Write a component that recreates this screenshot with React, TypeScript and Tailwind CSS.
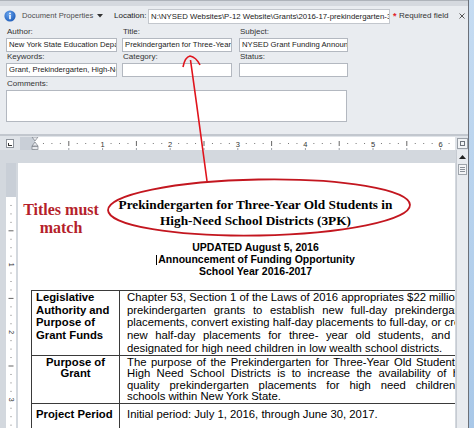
import React from 'react';

const IN = 67.6;

const HRuler = () => {
  const marks: React.ReactNode[] = [];
  for (let i = 1; i <= 60; i++) {
    const x = 15 + (i * IN) / 8;
    if (x > 433) break;
    if (i % 8 === 0) {
      marks.push(
        <text key={i} x={x} y={9.6} fontSize="7.5" textAnchor="middle" fill="#333" fontFamily="Liberation Sans, Arial, sans-serif">
          {i / 8}
        </text>
      );
    } else if (i % 4 === 0) {
      marks.push(<rect key={i} x={x - 0.5} y={4} width={1} height={5} fill="#666" />);
    } else {
      marks.push(<rect key={i} x={x - 0.5} y={6} width={1} height={1} fill="#777" />);
    }
    if (i % 4 === 0) marks.push(<rect key={'t' + i} x={x - 0.5} y={11} width={1} height={2} fill="#9aa0a8" />);
  }
  return (
    <svg width="435" height="13" className="block">
      <rect x="0" y="0" width="435" height="13" fill="#ffffff" />
      <rect x="0" y="0" width="15" height="13" fill="#c9cfd7" />
      {marks}
      <path d="M12 0 L18 0 L15 4 Z" fill="#e8eaee" stroke="#7a7f87" strokeWidth="0.7" />
      <path d="M15 5 L18 9 L12 9 Z" fill="#e8eaee" stroke="#7a7f87" strokeWidth="0.7" />
      <rect x="12" y="9.5" width="6" height="3" fill="#e8eaee" stroke="#7a7f87" strokeWidth="0.7" />
    </svg>
  );
};

const VRuler = () => {
  const marks: React.ReactNode[] = [];
  for (let i = 1; i <= 40; i++) {
    const y = 34 + (i * IN) / 8;
    if (y > 265) break;
    if (i % 8 === 0) {
      marks.push(
        <text key={i} x={5} y={y} fontSize="7" textAnchor="middle" dominantBaseline="central" fill="#333" fontFamily="Liberation Sans, Arial, sans-serif" transform={`rotate(90 5 ${y})`}>
          {i / 8}
        </text>
      );
    } else if (i % 4 === 0) {
      marks.push(<rect key={i} x={2.5} y={y - 0.5} width={5} height={1} fill="#666" />);
    } else {
      marks.push(<rect key={i} x={4.5} y={y - 0.5} width={1} height={1} fill="#777" />);
    }
  }
  return (
    <svg width="10" height="265" className="block">
      <rect x="0" y="0" width="10" height="265" fill="#ffffff" />
      <rect x="0" y="0" width="10" height="34" fill="#c9cfd7" />
      {marks}
    </svg>
  );
};

const Field = ({ label, value, w, className = '' }: { label: string; value: string; w: string; className?: string }) => (
  <div className={`${w} ${className}`}>
    <div className="h-[10px] leading-[10px] pl-[1px] text-[8px] text-[#333]">{label}</div>
    <div className="mt-[1px] h-[14px] bg-white border border-[#b3b8c0] px-[2px] leading-[12px] text-[7.7px] text-[#222] whitespace-nowrap overflow-hidden">
      {value}
    </div>
  </div>
);

const Line = ({ children, j = false }: { children: React.ReactNode; j?: boolean }) =>
  j ? (
    <div className="w-[347px] text-justify [text-align-last:justify]">{children}</div>
  ) : (
    <div className="whitespace-nowrap">{children}</div>
  );

export default function App() {
  return (
    <div className="relative w-[474px] h-[428px] overflow-hidden flex bg-[#bcd5ee] font-['Liberation_Sans',Arial,sans-serif]">
      <div className="w-[469px] h-full flex flex-col border-r border-[#6b7079] bg-[#e9ecf0]">
        {/* top strip */}
        <div className="h-[6px] bg-[#d5d9df] border-t border-[#aeb3ba]" />

        {/* document properties header */}
        <div className="h-[20px] flex items-center">
          <div className="w-[4px]" />
          <svg width="12" height="12" viewBox="0 0 12 12" className="shrink-0">
            <defs>
              <radialGradient id="ig" cx="40%" cy="35%" r="70%">
                <stop offset="0%" stopColor="#6aa6f0" />
                <stop offset="100%" stopColor="#1d5bb8" />
              </radialGradient>
            </defs>
            <circle cx="6" cy="6" r="5.6" fill="url(#ig)" />
            <circle cx="6" cy="3.4" r="0.9" fill="#fff" />
            <rect x="5.2" y="5" width="1.6" height="4.2" fill="#fff" />
          </svg>
          <div className="w-[6px]" />
          <div className="w-[92px] flex items-center text-[7.6px] text-[#4d4d4d]">
            <span>Document Properties</span>
            <svg width="6" height="4" className="ml-[4px]">
              <path d="M0 0 L6 0 L3 3.5 Z" fill="#333" />
            </svg>
          </div>
          <div className="w-[34px] text-[8px] text-[#222]">Location:</div>
          <div className="w-[242px] h-[15px] bg-white border border-[#c3c7cd] px-[2px] leading-[13px] text-[7.8px] text-[#222] whitespace-nowrap overflow-hidden">
            N:\NYSED Websites\P-12 Website\Grants\2016-17-prekindergarten-3pk
          </div>
          <div className="w-[3px]" />
          <div className="w-[6px] text-[9px] font-bold text-[#e0222a] leading-[9px]">*</div>
          <div className="w-[60px] text-[8px] text-[#333]">Required field</div>
          <svg width="6" height="6" className="shrink-0">
            <path d="M0.5 0.5 L5.5 5.5 M5.5 0.5 L0.5 5.5" stroke="#555" strokeWidth="1" />
          </svg>
        </div>

        {/* property fields */}
        <div className="px-[6px] pt-[1px] h-[108px]">
          <div className="flex">
            <Field label="Author:" value="New York State Education Department" w="w-[111px]" />
            <Field label="Title:" value="Prekindergarten for Three-Year Old Students" w="w-[110px]" className="ml-[5px]" />
            <Field label="Subject:" value="NYSED Grant Funding Announcement" w="w-[109px]" className="ml-[7px]" />
          </div>
          <div className="flex">
            <Field label="Keywords:" value="Grant, Prekindergarten, High-Need" w="w-[111px]" />
            <Field label="Category:" value="" w="w-[110px]" className="ml-[5px]" />
            <Field label="Status:" value="" w="w-[109px]" className="ml-[7px]" />
          </div>
          <div className="mt-[2px] h-[10px] leading-[10px] pl-[1px] text-[8px] text-[#333]">Comments:</div>
          <div className="mt-[1px] w-[341px] h-[32px] bg-white border border-[#b3b8c0]" />
        </div>

        {/* ruler band */}
        <div className="h-[16px] flex items-end bg-[#dfe3e8] border-t-[2px] border-[#c2c7ce]">
          <div className="w-[6px]" />
          <div className="w-[8px] h-[9px] mb-[2px] bg-white border border-[#8d939b] flex items-end justify-start">
            <div className="w-[4px] h-[3px] ml-[1px] mb-[1px] border-l border-b border-[#333]" />
          </div>
          <div className="w-[6px]" />
          <HRuler />
          <div className="w-[2px]" />
          <div className="w-[11px] h-[11px] mb-[1px] bg-[#f1f3f5] border border-[#9aa0a8] flex items-center justify-center">
            <div className="w-[5px] h-[5px] border border-[#6d737b]" />
          </div>
        </div>

        {/* document area */}
        <div className="flex-1 flex bg-[#d3d8de] min-h-0">
          <div className="w-[6px]" />
          <div className="w-[10px] pt-[13px]">
            <VRuler />
          </div>
          <div className="w-[2px]" />
          <div className="w-[437px] pt-[13px] overflow-hidden">
            <div className="h-full bg-white pl-[17px] pt-[34px]">
              <div className="w-[441px] text-black">
                <div className="text-center font-['Liberation_Serif',serif] font-bold text-[13.3px] leading-[16px]">
                  <div>Prekindergarten for Three-Year Old Students in</div>
                  <div>High-Need School Districts (3PK)</div>
                </div>
                <div className="mt-[12px] text-center font-bold text-[10.5px] leading-[12px]">
                  <div>UPDATED August 5, 2016</div>
                  <div>
                    <span className="inline-block w-0 h-[10px] border-l border-black align-[-2px] mr-[1px]" />
                    Announcement of Funding Opportunity
                  </div>
                  <div>School Year 2016-2017</div>
                </div>

                {/* table */}
                <div className="mt-[13px] -ml-[4px] w-[449px] border-l border-t border-[#3a3a3a] text-[11.3px]">
                  <div className="flex border-b border-[#3a3a3a] leading-[12.7px]">
                    <div className="w-[88px] shrink-0 border-r border-[#3a3a3a] pl-[4px] font-bold">
                      <div>Legislative</div>
                      <div>Authority and</div>
                      <div>Purpose of</div>
                      <div>Grant Funds</div>
                    </div>
                    <div className="pl-[7px] shrink-0 w-[360px]">
                      <Line>Chapter 53, Section 1 of the Laws of 2016 appropriates $22 million</Line>
                      <Line j>prekindergarten grants to establish new full-day prekindergarten</Line>
                      <Line>placements, convert existing half-day placements to full-day, or create</Line>
                      <Line j>new half-day placements for three- year old students, and are</Line>
                      <Line>designated for high need children in low wealth school districts.</Line>
                    </div>
                  </div>
                  <div className="flex border-b border-[#3a3a3a] leading-[11.6px]">
                    <div className="w-[88px] shrink-0 border-r border-[#3a3a3a] text-center font-bold pt-[1px]">
                      <div>Purpose of</div>
                      <div>Grant</div>
                    </div>
                    <div className="pl-[7px] shrink-0 w-[360px] pt-[1px]">
                      <Line j>The purpose of the Prekindergarten for Three-Year Old Students in</Line>
                      <Line j>High Need School Districts is to increase the availability of high</Line>
                      <Line j>quality prekindergarten placements for high need children in</Line>
                      <Line>schools within New York State.</Line>
                    </div>
                  </div>
                  <div className="flex leading-[12px] h-[40px]">
                    <div className="w-[88px] shrink-0 border-r border-[#3a3a3a] pl-[4px] pt-[4px] font-bold whitespace-nowrap">
                      Project Period
                    </div>
                    <div className="pl-[7px] shrink-0 w-[360px] pt-[4px]">
                      <Line>Initial period: July 1, 2016, through June 30, 2017.</Line>
                    </div>
                  </div>
                </div>
              </div>
            </div>
          </div>
          <div className="w-[1px]" />
          <div className="w-[12px] bg-[#e8ebef] border-l border-[#c6cbd2] flex flex-col items-center">
            <svg width="7" height="4" className="mt-[5px]">
              <path d="M0 4 L3.5 0 L7 4 Z" fill="#222" />
            </svg>
            <div className="mt-[5px] w-[9px] h-[11px] bg-[#f3f4f6] border border-[#9ea4ab] flex flex-col items-center justify-center gap-[1px]">
              <div className="w-[5px] h-px bg-[#8a9098]" />
              <div className="w-[5px] h-px bg-[#8a9098]" />
              <div className="w-[5px] h-px bg-[#8a9098]" />
            </div>
          </div>
        </div>
      </div>
      <div className="flex-1 bg-gradient-to-b from-[#c6dcf2] to-[#a9c8e8]" />

      {/* annotation: Titles must match */}
      <div className="absolute left-[11px] top-[201px] w-[100px] text-center font-['Liberation_Serif',serif] font-bold text-[16px] leading-[18px] text-[#b51f2b]">
        <div>Titles must</div>
        <div>match</div>
      </div>

      {/* annotation: ellipse and arrow */}
      <svg className="absolute left-0 top-0 pointer-events-none" width="474" height="428">
        <ellipse cx="259" cy="207.5" rx="151" ry="28" fill="none" stroke="#c3161f" strokeWidth="1.8" transform="rotate(-1 259 207.5)" />
        <path d="M207 181 C 203 150, 196 100, 190.5 60" fill="none" stroke="#e0141c" strokeWidth="1.6" />
        <path d="M183 67 Q 185 57 190 56 Q 196 57 200 65" fill="none" stroke="#e0141c" strokeWidth="1.6" />
      </svg>
    </div>
  );
}
